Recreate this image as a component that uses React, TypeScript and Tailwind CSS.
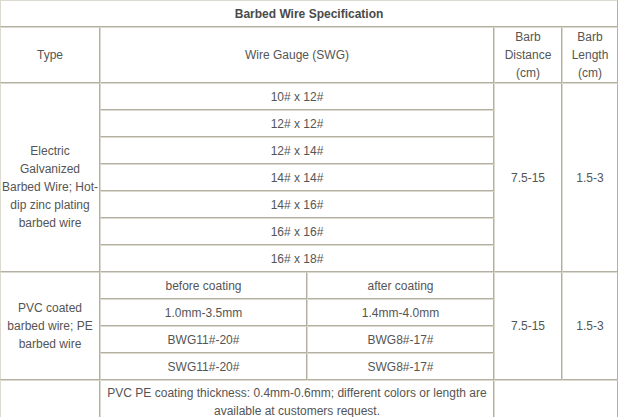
const gauges = ["10# x 12#", "12# x 12#", "12# x 14#", "14# x 14#", "14# x 16#", "16# x 16#", "16# x 18#"];

const pvcRows = [
  ["before coating", "after coating"],
  ["1.0mm-3.5mm", "1.4mm-4.0mm"],
  ["BWG11#-20#", "BWG8#-17#"],
  ["SWG11#-20#", "SWG8#-17#"],
];

// darker line on right/bottom, lighter on left/top -> double rule between cells
const cell =
  "border-t border-l border-r border-b border-t-[#dcd9ce] border-l-[#dcd9ce] border-r-[#b3b0a1] border-b-[#b3b0a1] p-0 text-center align-middle";

export default function App() {
  return (
    <div className="min-h-screen bg-white">
      <table
        className="w-[618px] table-fixed border-separate border-spacing-0 text-[12px] leading-[18px] text-[#555555]"
        style={{ fontFamily: '"Liberation Sans", Arial, sans-serif' }}
      >
        <colgroup>
          <col className="w-[100px]" />
          <col className="w-[207px]" />
          <col className="w-[187px]" />
          <col className="w-[68px]" />
          <col className="w-[56px]" />
        </colgroup>
        <tbody>
          <tr className="h-[27px]">
            <td colSpan={5} className={`${cell} font-bold text-[#4a4a4a]`}>
              Barbed Wire Specification
            </td>
          </tr>
          <tr className="h-[56px]">
            <td className={cell}>Type</td>
            <td colSpan={2} className={cell}>
              Wire Gauge (SWG)
            </td>
            <td className={cell}>
              Barb
              <br />
              Distance
              <br />
              (cm)
            </td>
            <td className={cell}>
              Barb
              <br />
              Length
              <br />
              (cm)
            </td>
          </tr>
          {gauges.map((g, i) => (
            <tr key={g} className="h-[27px]">
              {i === 0 && (
                <td rowSpan={7} className={cell}>
                  <br />
                  Electric Galvanized Barbed Wire; Hot-dip zinc plating barbed wire
                </td>
              )}
              <td colSpan={2} className={cell}>
                {g}
              </td>
              {i === 0 && (
                <>
                  <td rowSpan={7} className={cell}>
                    7.5-15
                  </td>
                  <td rowSpan={7} className={cell}>
                    1.5-3
                  </td>
                </>
              )}
            </tr>
          ))}
          {pvcRows.map(([a, b], i) => (
            <tr key={a} className="h-[27px]">
              {i === 0 && (
                <td rowSpan={4} className={cell}>
                  PVC coated barbed wire; PE barbed wire
                </td>
              )}
              <td className={cell}>{a}</td>
              <td className={cell}>{b}</td>
              {i === 0 && (
                <>
                  <td rowSpan={4} className={cell}>
                    7.5-15
                  </td>
                  <td rowSpan={4} className={cell}>
                    1.5-3
                  </td>
                </>
              )}
            </tr>
          ))}
          <tr className="h-[44px]">
            <td className={cell}></td>
            <td colSpan={2} className={cell}>
              PVC PE coating thickness: 0.4mm-0.6mm; different colors or length are available at customers request.
            </td>
            <td colSpan={2} className={cell}></td>
          </tr>
        </tbody>
      </table>
    </div>
  );
}
